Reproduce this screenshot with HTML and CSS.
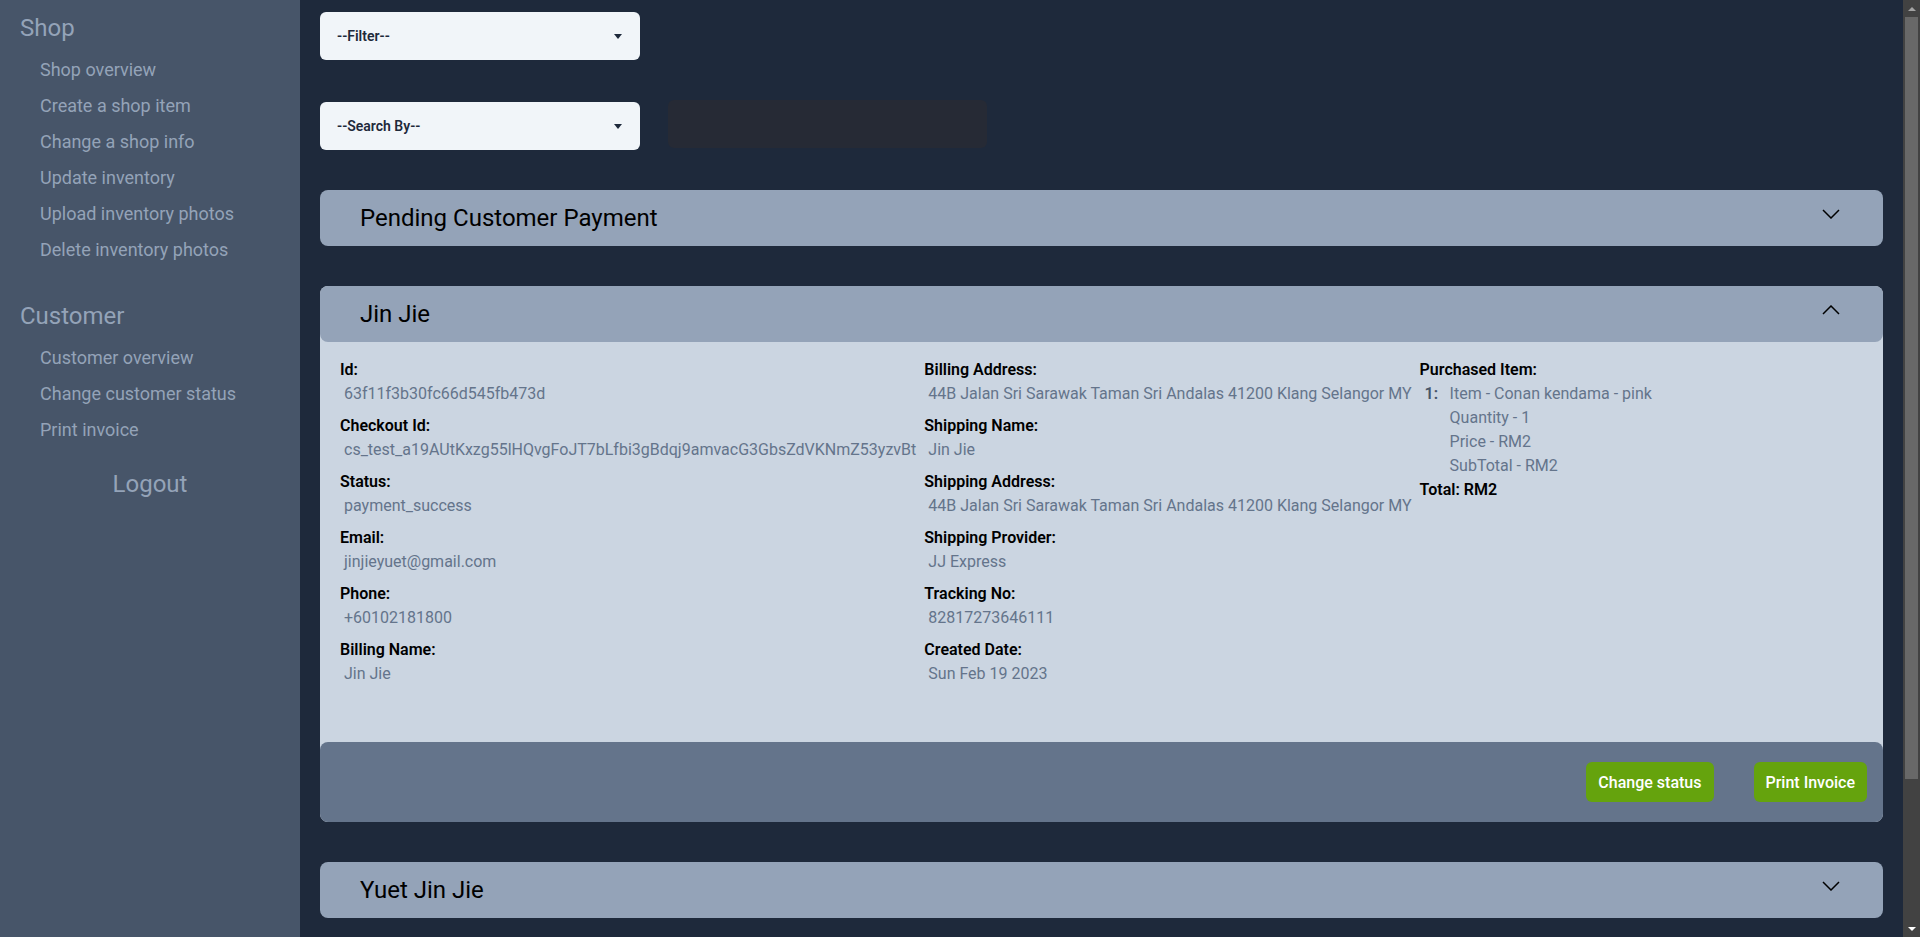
FILE: index.html
```html
<!DOCTYPE html>
<html lang="en">
<head>
<meta charset="UTF-8">
<meta name="viewport" content="width=device-width, initial-scale=1.0">
<title>Print invoice</title>
<link rel="stylesheet" href="styles.css">
</head>
<body>

<div class="sidebar">
    <h2>Shop</h2>
    <ul>
        <li><a href="#">Shop overview</a></li>
        <li><a href="#">Create a shop item</a></li>
        <li><a href="#">Change a shop info</a></li>
        <li><a href="#">Update inventory</a></li>
        <li><a href="#">Upload inventory photos</a></li>
        <li><a href="#">Delete inventory photos</a></li>
    </ul>
    <h2 class="section">Customer</h2>
    <ul>
        <li><a href="#">Customer overview</a></li>
        <li><a href="#">Change customer status</a></li>
        <li><a href="#">Print invoice</a></li>
    </ul>
    <a class="logout" href="#">Logout</a>
</div>

<div class="main">
    <div class="toolbar">
        <div class="select-wrap">
            <select id="filter">
                <option>--Filter--</option>
                <option>payment_success</option>
                <option>shipped</option>
            </select>
        </div>
    </div>

    <div class="toolbar second">
        <div class="select-wrap">
            <select id="searchBy">
                <option>--Search By--</option>
                <option>Name</option>
                <option>Email</option>
            </select>
        </div>
        <input class="search" type="text" id="search">
    </div>

    <div class="panel">
        <div class="panel-head">
            <span>Pending Customer Payment</span>
            <svg class="chevron" width="18" height="10" viewBox="0 0 18 10"><polyline points="1,1 9,9 17,1"/></svg>
        </div>
    </div>

    <div class="panel open">
        <div class="panel-head">
            <span>Jin Jie</span>
            <svg class="chevron" width="18" height="10" viewBox="0 0 18 10"><polyline points="1,9 9,1 17,9"/></svg>
        </div>
        <div class="panel-body">
            <div class="col">
                <div class="label">Id:</div>
                <div class="value">63f11f3b30fc66d545fb473d</div>
                <div class="label">Checkout Id:</div>
                <div class="value">cs_test_a19AUtKxzg55lHQvgFoJT7bLfbi3gBdqj9amvacG3GbsZdVKNmZ53yzvBt</div>
                <div class="label">Status:</div>
                <div class="value">payment_success</div>
                <div class="label">Email:</div>
                <div class="value">jinjieyuet@gmail.com</div>
                <div class="label">Phone:</div>
                <div class="value">+60102181800</div>
                <div class="label">Billing Name:</div>
                <div class="value">Jin Jie</div>
            </div>
            <div class="col">
                <div class="label">Billing Address:</div>
                <div class="value">44B Jalan Sri Sarawak Taman Sri Andalas 41200 Klang Selangor MY</div>
                <div class="label">Shipping Name:</div>
                <div class="value">Jin Jie</div>
                <div class="label">Shipping Address:</div>
                <div class="value">44B Jalan Sri Sarawak Taman Sri Andalas 41200 Klang Selangor MY</div>
                <div class="label">Shipping Provider:</div>
                <div class="value">JJ Express</div>
                <div class="label">Tracking No:</div>
                <div class="value">82817273646111</div>
                <div class="label">Created Date:</div>
                <div class="value">Sun Feb 19 2023</div>
            </div>
            <div class="col grow">
                <div class="label">Purchased Item:</div>
                <div class="item">
                    <span class="item-no">1:</span>
                    <div class="item-lines">
                        <div>Item - Conan kendama - pink</div>
                        <div>Quantity - 1</div>
                        <div>Price - RM2</div>
                        <div>SubTotal - RM2</div>
                    </div>
                </div>
                <div class="label">Total: RM2</div>
            </div>
        </div>
        <div class="panel-foot">
            <button class="btn">Change status</button>
            <button class="btn">Print Invoice</button>
        </div>
    </div>

    <div class="panel">
        <div class="panel-head">
            <span>Yuet Jin Jie</span>
            <svg class="chevron" width="18" height="10" viewBox="0 0 18 10"><polyline points="1,1 9,9 17,1"/></svg>
        </div>
    </div>
</div>

<!-- page scrollbar, dark theme -->
<div class="scrollbar">
    <div class="scroll-btn up"></div>
    <div class="scroll-thumb"></div>
    <div class="scroll-btn down"></div>
</div>

</body>
</html>
```

FILE: styles.css
```css
body {
    margin: 0;
    padding: 0;
    display: flex;
    height: 100vh;
    overflow: hidden;
    font-family: Roboto, "Liberation Sans", Arial, sans-serif;
    background-color: #1e293b;
}

.sidebar {
    width: 300px;
    flex-shrink: 0;
    height: 100vh;
    box-sizing: border-box;
    padding: 12px 20px;
    background-color: #475569;
    color: #94a3b8;
}

.sidebar h2 {
    margin: 0;
    font-size: 24px;
    font-weight: 400;
    line-height: 32px;
}

.sidebar h2.section {
    margin-top: 32px;
}

.sidebar ul {
    list-style: none;
    margin: 8px 0 0;
    padding: 0 0 0 20px;
}

.sidebar li {
    font-size: 18px;
    line-height: 36px;
}

.sidebar a {
    color: inherit;
    text-decoration: none;
}

.logout {
    display: block;
    margin-top: 20px;
    text-align: center;
    font-size: 24px;
    line-height: 32px;
}

.main {
    flex: 1;
    min-width: 0;
    padding: 12px 20px 0;
    overflow: hidden;
}

.toolbar {
    display: flex;
    align-items: center;
    gap: 28px;
}

.toolbar.second {
    margin-top: 42px;
}

.select-wrap {
    position: relative;
    width: 320px;
}

.select-wrap select {
    appearance: none;
    width: 100%;
    height: 48px;
    border: none;
    border-radius: 6px;
    padding: 0 17px;
    background-color: #f1f5f9;
    color: #1e293b;
    font-family: Roboto, "Liberation Sans", Arial, sans-serif;
    font-size: 14px;
    font-weight: 600;
}

.select-wrap::after {
    content: "";
    position: absolute;
    right: 18px;
    top: 22px;
    border-left: 4px solid transparent;
    border-right: 4px solid transparent;
    border-top: 5px solid #1e293b;
    pointer-events: none;
}

.search {
    width: 319px;
    height: 48px;
    box-sizing: border-box;
    margin-top: -4px;
    border: none;
    border-radius: 6px;
    background-color: #262a35;
    color: #e2e8f0;
}

.panel {
    margin-top: 40px;
    border-radius: 8px;
}

.panel.open {
    background-color: #cbd5e1;
}

.panel-head {
    display: flex;
    align-items: center;
    justify-content: space-between;
    height: 56px;
    padding: 0 43px 0 40px;
    border-radius: 8px;
    background-color: #94a3b8;
    color: #000;
    font-size: 24px;
}

.chevron {
    margin-bottom: 8px;
    fill: none;
    stroke: #000;
    stroke-width: 1.5;
}

.panel-body {
    display: flex;
    gap: 8px;
    padding: 16px 20px 48px;
    font-size: 16px;
    line-height: 24px;
}

.col {
    flex: none;
}

.col.grow {
    flex: 1;
}

.label {
    color: #000;
    font-weight: 600;
}

.value {
    padding-left: 4px;
    margin-bottom: 8px;
    color: #64748b;
    white-space: nowrap;
}

.item {
    display: flex;
}

.item-no {
    width: 25px;
    padding-left: 5px;
    color: #475569;
    font-weight: 600;
}

.item-lines {
    color: #64748b;
}

.panel-foot {
    display: flex;
    justify-content: flex-end;
    align-items: center;
    gap: 40px;
    height: 80px;
    padding: 0 16px;
    border-radius: 8px;
    background-color: #64748b;
}

.btn {
    height: 40px;
    padding: 0 12px;
    border: none;
    border-radius: 6px;
    background-color: #65a30d;
    color: #fff;
    font-family: Roboto, "Liberation Sans", Arial, sans-serif;
    font-size: 16px;
    font-weight: 500;
    cursor: pointer;
}

.scrollbar {
    width: 17px;
    flex-shrink: 0;
    height: 100vh;
    display: flex;
    flex-direction: column;
    background-color: #424242;
}

.scroll-btn {
    height: 17px;
    display: flex;
    align-items: center;
    justify-content: center;
}

.scroll-btn::before {
    content: "";
    border-left: 4px solid transparent;
    border-right: 4px solid transparent;
}

.scroll-btn.up::before {
    border-bottom: 4px solid #a3a3a3;
}

.scroll-btn.down {
    margin-top: auto;
}

.scroll-btn.down::before {
    border-top: 4px solid #fff;
}

.scroll-thumb {
    height: 762px;
    margin: 0 2px;
    background-color: #686868;
}
```
